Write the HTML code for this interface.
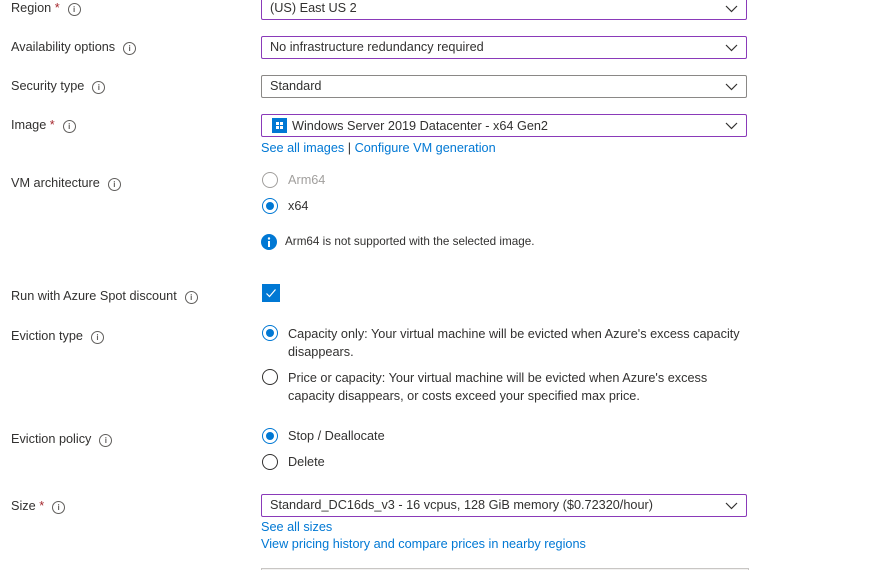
<!DOCTYPE html>
<html><head><style>
html,body{overflow:hidden}
body{margin:0;width:880px;height:570px;overflow:hidden;background:#fff;font-family:"Liberation Sans",sans-serif;font-size:12.7px;color:#323130;position:relative}
.a{position:absolute;white-space:nowrap}
.lbl{left:11px}
.req{color:#a4262c}
.i{display:inline-block;width:11px;height:11px;border:1px solid #605e5c;border-radius:50%;font-size:8px;line-height:11px;text-align:center;color:#605e5c;margin-left:8px;vertical-align:0px;font-weight:bold}
.dd{position:absolute;left:261px;width:484px;height:21px;border:1px solid #8a3ab9;border-radius:2px;box-sizing:content-box}
.dd span{position:absolute;left:8px;top:3px}
.dd svg{position:absolute;right:8px;top:7px}
.g{border-color:#8a8886}
.lk{color:#0078d4}
.r{position:absolute;width:16px;height:16px;border:1px solid #323130;border-radius:50%;box-sizing:border-box}
.r.on{border-color:#0078d4}
.r.on:after{content:"";position:absolute;left:3px;top:3px;width:8px;height:8px;border-radius:50%;background:#0078d4}
</style></head><body>
<div class="a lbl" style="top:1px">Region <span class="req">*</span><span class="i">i</span></div>
<div class="a lbl" style="top:40px">Availability options<span class="i">i</span></div>
<div class="a lbl" style="top:79px">Security type<span class="i">i</span></div>
<div class="a lbl" style="top:118px">Image <span class="req">*</span><span class="i">i</span></div>
<div class="a lbl" style="top:176px">VM architecture<span class="i">i</span></div>
<div class="a lbl" style="top:289px">Run with Azure Spot discount<span class="i">i</span></div>
<div class="a lbl" style="top:329px">Eviction type<span class="i">i</span></div>
<div class="a lbl" style="top:432px">Eviction policy<span class="i">i</span></div>
<div class="a lbl" style="top:499px">Size <span class="req">*</span><span class="i">i</span></div>

<div class="dd" style="top:-3px"><span>(US) East US 2</span><svg width="13" height="8"><path d="M1 1l5.5 5.5L12 1" fill="none" stroke="#323130" stroke-width="1.2"/></svg></div>
<div class="dd" style="top:36px"><span>No infrastructure redundancy required</span><svg width="13" height="8"><path d="M1 1l5.5 5.5L12 1" fill="none" stroke="#323130" stroke-width="1.2"/></svg></div>
<div class="dd g" style="top:75px"><span>Standard</span><svg width="13" height="8"><path d="M1 1l5.5 5.5L12 1" fill="none" stroke="#323130" stroke-width="1.2"/></svg></div>
<div class="dd" style="top:114px"><span style="left:10px"><svg style="position:static;vertical-align:-3px;margin-right:5px" width="15" height="15"><rect width="15" height="15" fill="#0078d4"/><path d="M4 4h3v3H4zM8 4h3v3H8zM4 8h3v3H4zM8 8h3v3H8z" fill="#fff"/></svg>Windows Server 2019 Datacenter - x64 Gen2</span><svg width="13" height="8"><path d="M1 1l5.5 5.5L12 1" fill="none" stroke="#323130" stroke-width="1.2"/></svg></div>
<div class="a lk" style="left:261px;top:141px">See all images <span style="color:#323130">|</span> Configure VM generation</div>

<div class="r" style="left:262px;top:172px;border-color:#a19f9d"></div><div class="a" style="left:288px;top:173px;color:#a19f9d">Arm64</div>
<div class="r on" style="left:262px;top:198px"></div><div class="a" style="left:288px;top:199px">x64</div>
<svg class="a" style="left:261px;top:234px" width="16" height="16"><circle cx="8" cy="8" r="8" fill="#0078d4"/><rect x="7" y="7" width="2" height="6" fill="#fff"/><circle cx="8" cy="4.5" r="1.2" fill="#fff"/></svg>
<div class="a" style="left:285px;top:235px;font-size:11.7px">Arm64 is not supported with the selected image.</div>

<svg class="a" style="left:262px;top:284px" width="18" height="18"><rect width="18" height="18" fill="#0078d4"/><path d="M4.5 9.5l3 3 6-7" fill="none" stroke="#fff" stroke-width="1.2"/></svg>

<div class="r on" style="left:262px;top:325px"></div>
<div class="a" style="left:288px;top:325px;line-height:18px">Capacity only: Your virtual machine will be evicted when Azure's excess capacity<br>disappears.</div>
<div class="r" style="left:262px;top:369px"></div>
<div class="a" style="left:288px;top:369px;line-height:18px">Price or capacity: Your virtual machine will be evicted when Azure's excess<br>capacity disappears, or costs exceed your specified max price.</div>

<div class="r on" style="left:262px;top:428px"></div><div class="a" style="left:288px;top:429px">Stop / Deallocate</div>
<div class="r" style="left:262px;top:454px"></div><div class="a" style="left:288px;top:455px">Delete</div>

<div class="dd" style="top:494px"><span>Standard_DC16ds_v3 - 16 vcpus, 128 GiB memory ($0.72320/hour)</span><svg width="13" height="8"><path d="M1 1l5.5 5.5L12 1" fill="none" stroke="#323130" stroke-width="1.2"/></svg></div>
<div class="a lk" style="left:261px;top:520px">See all sizes</div>
<div class="a lk" style="left:261px;top:537px">View pricing history and compare prices in nearby regions</div>
<div class="a" style="left:261px;top:568px;width:486px;height:1px;border:1px solid #c8c6c4;border-bottom:0;background:#f3f2f1"></div>
</body></html>
